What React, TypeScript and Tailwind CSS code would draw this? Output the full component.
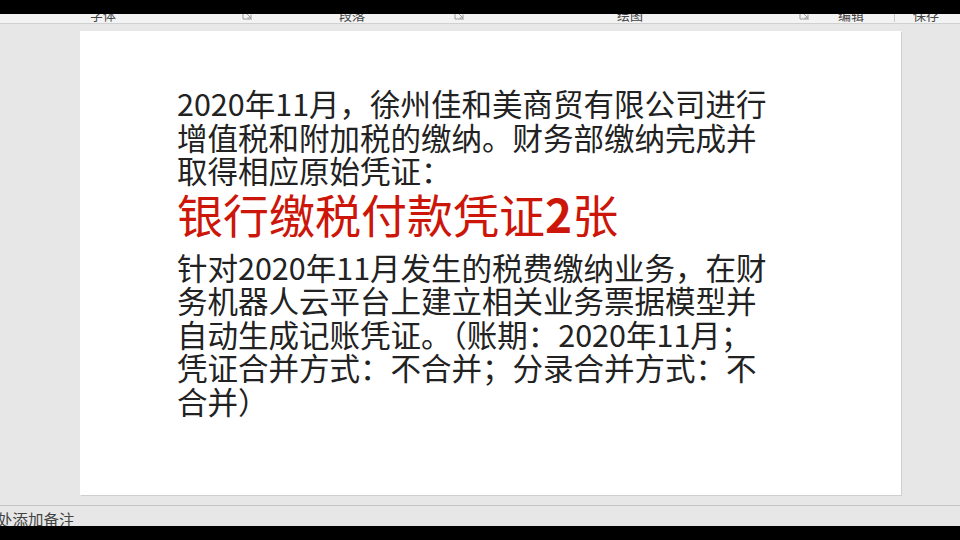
import React from 'react';

const CJK = { fontFamily: '"Noto Sans CJK SC", "Noto Sans", sans-serif' };

// dialog launcher in the ribbon group corner (only its lower half shows)
function Launcher() {
  return (
    <svg width="11" height="11" viewBox="0 0 11 11" className="text-[#9a9a9a]">
      <path d="M1 1v9h9" fill="none" stroke="currentColor" strokeWidth="1" />
      <path d="M4 4l5 5M9 5.5V9H5.5" fill="none" stroke="currentColor" strokeWidth="1" />
    </svg>
  );
}

function RibbonLabel({ text, className }: { text: string; className?: string }) {
  return (
    <span className={`text-[13px] leading-[14px] text-[#444] ${className ?? ''}`} style={CJK}>
      {text}
    </span>
  );
}

function Ribbon() {
  return (
    <div className="h-[10px] bg-[#f3f3f3] border-b border-[#d0d0d0] overflow-hidden">
      <div className="flex items-start -mt-[6px] h-[14px]">
        <RibbonLabel text="字体" className="ml-[90px]" />
        <span className="ml-[126px] mt-[1px]">
          <Launcher />
        </span>
        <RibbonLabel text="段落" className="ml-[86px]" />
        <span className="ml-[89px] mt-[1px]">
          <Launcher />
        </span>
        <RibbonLabel text="绘图" className="ml-[152px]" />
        <span className="ml-[156px] mt-[1px]">
          <Launcher />
        </span>
        <RibbonLabel text="编辑" className="ml-[28px]" />
        <span className="ml-[30px] w-px h-[14px] bg-[#c8c8c8]" />
        <RibbonLabel text="保存" className="ml-[18px]" />
      </div>
    </div>
  );
}

function Slide() {
  return (
    <div className="w-[821px] h-[464px] bg-white shadow-[1px_1px_0_#cfcfcf] pl-[97px] pt-[56px]" style={CJK}>
      <p className="text-[30.5px] leading-[33.5px] text-[#222] whitespace-nowrap">
        2020年11月，徐州佳和美商贸有限公司进行
        <br />
        增值税和附加税的缴纳。财务部缴纳完成并
        <br />
        取得相应原始凭证：
      </p>
      <p className="text-[46px] leading-[50px] text-[#cc1609] whitespace-nowrap">
        银行缴税付款凭证<span className="font-bold">2</span>张
      </p>
      <p className="mt-[13px] text-[30.5px] leading-[33.5px] text-[#222] whitespace-nowrap">
        针对2020年11月发生的税费缴纳业务，在财
        <br />
        务机器人云平台上建立相关业务票据模型并
        <br />
        自动生成记账凭证。（账期：2020年11月；
        <br />
        凭证合并方式：不合并；分录合并方式：不
        <br />
        合并）
      </p>
    </div>
  );
}

export default function App() {
  return (
    <div className="w-[960px] h-[540px] flex flex-col bg-[#e6e7e6] overflow-hidden">
      <div className="h-[14px] bg-black shrink-0" />
      <Ribbon />
      <div className="h-[481px] pt-[7px] pl-[80px]">
        <Slide />
      </div>
      <div className="h-[21px] border-t border-[#c4c4c4] overflow-hidden">
        <div className="-ml-[3px] mt-[3px] text-[15.5px] leading-[20px] text-[#444]" style={CJK}>
          处添加备注
        </div>
      </div>
      <div className="h-[14px] bg-black shrink-0" />
    </div>
  );
}
